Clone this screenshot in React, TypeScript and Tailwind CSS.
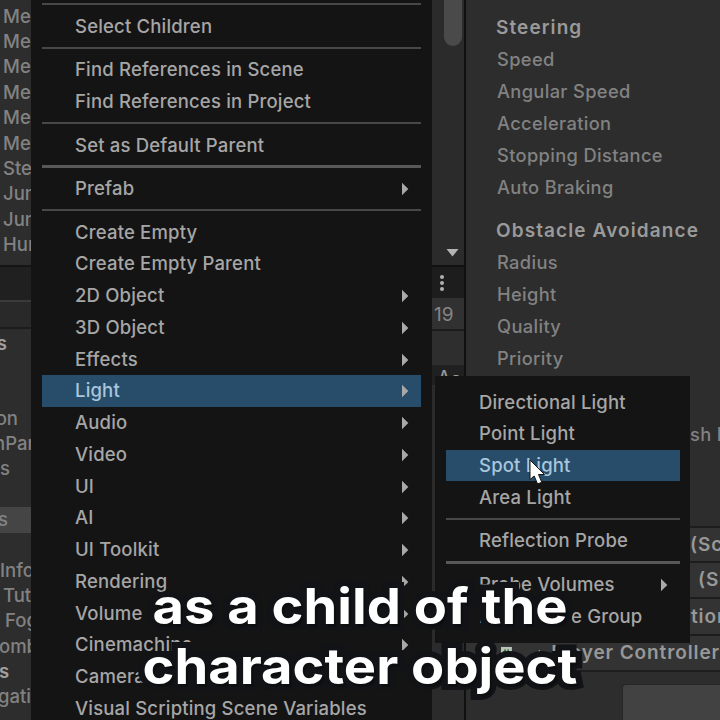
import type { ReactNode } from "react";

function Arrow() {
  return (
    <svg className="h-[14px] w-[8px] shrink-0" viewBox="0 0 8 14">
      <path d="M1 .8 7.3 7 1 13.2Z" fill="#a9a9a9" />
    </svg>
  );
}

function Item({ children, arrow, active }: { children: ReactNode; arrow?: boolean; active?: boolean }) {
  return (
    <div
      className={`flex h-[31.75px] shrink-0 items-center justify-between whitespace-pre pl-[33px] pr-[12px] pt-px text-[18.5px] font-[450] tracking-[0.18px] ${
        active ? "bg-[#274d6b] text-[#a9c6dc]" : "text-[#a6a6a6]"
      }`}
    >
      <span>{children}</span>
      {arrow && <Arrow />}
    </div>
  );
}

function Separator({ thick }: { thick?: boolean }) {
  return (
    <div className="flex h-[11.8px] shrink-0 items-center">
      <div className={`w-full ${thick ? "h-[3px] bg-[#585858]" : "h-[2px] bg-[#484848]"}`} />
    </div>
  );
}

function TreeRow({ children, className = "" }: { children?: ReactNode; className?: string }) {
  return <div className={`flex h-[25.35px] shrink-0 items-center whitespace-pre ${className}`}>{children}</div>;
}

function Field({ children, bold }: { children: ReactNode; bold?: boolean }) {
  return (
    <div
      className={`flex h-[31.8px] shrink-0 items-center whitespace-pre ${
        bold ? "-ml-px text-[19px] font-semibold tracking-[1.1px] text-[#9a9a9a]" : "text-[18.3px] font-[450] tracking-[0.35px] text-[#828282]"
      }`}
    >
      {children}
    </div>
  );
}

function LeftPanel() {
  return (
    <div className="flex w-8 shrink-0 flex-col overflow-hidden bg-[#2d2d2d] text-[18.5px] font-[450] text-[#828282]">
      <div className="flex h-[265px] shrink-0 flex-col overflow-hidden pl-[3px] pt-[4px]">
        {["Me", "Me", "Me", "Me", "Me", "Me", "Ste", "Jun", "Jun", "Hun"].map((t, i) => (
          <TreeRow key={i}>{t}</TreeRow>
        ))}
      </div>
      <div className="h-[35px] shrink-0 border-t-2 border-[#151515] bg-[#202020]" />
      <div className="h-[29px] shrink-0 border-b-2 border-t-2 border-b-[#1c1c1c] border-t-[#3a3a3a] bg-[#292929]" />
      <TreeRow className="mt-[2px] justify-end pr-[25px] font-semibold text-[#a0a0a0]">s</TreeRow>
      <div className="h-[49.5px] shrink-0" />
      <TreeRow className="justify-end pr-[14px]">on</TreeRow>
      <TreeRow className="-ml-[6px]">nPar</TreeRow>
      <TreeRow>s</TreeRow>
      <TreeRow />
      <TreeRow className="bg-[#454545]">
        <span className="-ml-[2px]">s</span>
      </TreeRow>
      <TreeRow />
      <TreeRow>Info</TreeRow>
      <TreeRow className="pl-[3px]">Tut</TreeRow>
      <TreeRow className="pl-[5px]">Fog</TreeRow>
      <TreeRow className="-ml-px">omb</TreeRow>
      <TreeRow className="-ml-px font-semibold text-[#a0a0a0]">s</TreeRow>
      <TreeRow className="-ml-[2px]">gatio</TreeRow>
    </div>
  );
}

function MiddleStrip() {
  return (
    <div className="flex w-8 shrink-0 flex-col overflow-hidden bg-[#2b2b2b]">
      <div className="relative flex h-[265px] shrink-0 flex-col items-end justify-between pr-[2px]">
        <div className="-mt-3 h-[58px] w-[18px] rounded-full bg-[#4a4a4a]" />
        <svg className="mb-[8px] mr-[3px] h-[8px] w-[13px]" viewBox="0 0 12 8">
          <path d="M0 0H12L6 7.5Z" fill="#b4b4b4" />
        </svg>
      </div>
      <div className="flex h-[33px] shrink-0 flex-col items-center justify-center gap-[2px] border-t-2 border-[#111] bg-[#1d1d1d] pr-[12px]">
        <i className="size-[4px] rounded-full bg-[#b0b0b0]" />
        <i className="size-[4px] rounded-full bg-[#b0b0b0]" />
        <i className="size-[4px] rounded-full bg-[#b0b0b0]" />
      </div>
      <div className="flex h-[33px] shrink-0 items-center border-b-2 border-[#1c1c1c] bg-[#313131] pl-[2px] pt-[4px] text-[19px] text-[#858585]">19</div>
      <div className="h-[34px] shrink-0 bg-[#2e2e2e]" />
      <div className="flex h-[20px] shrink-0 items-start bg-[#202020] pl-[7px] pt-px text-[14px] font-semibold leading-[20px] text-[#999]">A -</div>
    </div>
  );
}

function Component({ children, className, height }: { children: ReactNode; className: string; height: string }) {
  return (
    <div className={`flex ${height} shrink-0 items-center whitespace-pre border-t-2 border-[#1d1d1d] bg-[#333] pt-px text-[19px] font-semibold tracking-[0.9px] text-[#989898] ${className}`}>
      {children}
    </div>
  );
}

function Inspector() {
  return (
    <div className="flex flex-1 flex-col overflow-hidden border-l-2 border-[#101010] bg-[#2d2d2d]">
      <div className="flex h-[526px] shrink-0 flex-col pl-[31px] pt-[12.4px]">
        <Field bold>Steering</Field>
        <Field>Speed</Field>
        <Field>Angular Speed</Field>
        <Field>Acceleration</Field>
        <Field>Stopping Distance</Field>
        <Field>Auto Braking</Field>
        <div className="h-[12px] shrink-0" />
        <Field bold>Obstacle Avoidance</Field>
        <Field>Radius</Field>
        <Field>Height</Field>
        <Field>Quality</Field>
        <Field>Priority</Field>
        <div className="mt-[44.5px] pl-[193px]">
          <Field>sh Links</Field>
        </div>
      </div>
      <Component height="h-[35px]" className="pl-[224px]">(Script)</Component>
      <Component height="h-[36px]" className="pl-[232px]">(Script)</Component>
      <Component height="h-[37px]" className="pl-[225px]">tion</Component>
      <Component height="h-[36px]" className="pl-[35px]">
        <svg className="-mt-px mr-[21px] h-[20px] w-[18px]" viewBox="0 0 18 20">
          <path d="M0 0H18V20H0Z" fill="#b9c5b8" />
          <path d="M3 8H15M2 12H16M7 4 5 16M12 4 10 16" stroke="#26652d" strokeWidth="2.4" />
        </svg>
        <svg className="mr-[11px] h-[14px] w-[12px]" viewBox="0 0 12 14">
          <path d="m1 8 3 4 7-11" fill="none" stroke="#b0b0b0" strokeWidth="2" />
        </svg>
        Player Controller
      </Component>
      <div className="flex flex-1 justify-end border-t-2 border-[#1d1d1d] pt-[12px]">
        <div className="h-[60px] w-[98px] rounded-l-[4px] border border-r-0 border-[#262626] bg-[#424242]" />
      </div>
    </div>
  );
}

function ContextMenu() {
  return (
    <div className="absolute left-[31px] top-0 flex h-[720px] w-[401px] flex-col overflow-hidden bg-[#141414] pl-[11px] pr-[11px]">
      <div className="-mt-[1.5px] flex flex-col">
        <Separator />
        <Item>Select Children</Item>
        <Separator />
        <Item>Find References in Scene</Item>
        <Item>Find References in Project</Item>
        <Separator />
        <Item>Set as Default Parent</Item>
        <Separator thick />
        <Item arrow>Prefab</Item>
        <Separator />
        <Item>Create Empty</Item>
        <Item>Create Empty Parent</Item>
        <Item arrow>2D Object</Item>
        <Item arrow>3D Object</Item>
        <Item arrow>Effects</Item>
        <Item arrow active>Light</Item>
        <Item arrow>Audio</Item>
        <Item arrow>Video</Item>
        <Item arrow>UI</Item>
        <Item arrow>AI</Item>
        <Item arrow>UI Toolkit</Item>
        <Item arrow>Rendering</Item>
        <Item arrow>Volume</Item>
        <Item arrow>Cinemachine</Item>
        <Item>Camera</Item>
        <Item>Visual Scripting Scene Variables</Item>
      </div>
    </div>
  );
}

function LightSubmenu() {
  return (
    <div className="absolute left-[435px] top-[376px] flex h-[267px] w-[255px] flex-col bg-[#141414] pl-[11px] pr-[10px] pt-[10.2px]">
      <Item>Directional Light</Item>
      <Item>Point Light</Item>
      <Item active>Spot Light</Item>
      <Item>Area Light</Item>
      <Separator />
      <Item>Reflection Probe</Item>
      <Separator thick />
      <Item arrow>Probe Volumes</Item>
      <Item>Light Probe Group</Item>
    </div>
  );
}

const captionStyle =
  "whitespace-pre text-[50px] font-bold leading-[60px] text-white [paint-order:stroke_fill] [-webkit-text-stroke:12px_#121316] [text-shadow:2px_3px_0_#0d0e10]";

export default function App() {
  return (
    <div className="relative flex h-[720px] w-[720px] overflow-hidden bg-[#2d2d2d] font-['Inter',sans-serif]">
      <LeftPanel />
      <div className="w-[400px] shrink-0" />
      <MiddleStrip />
      <Inspector />
      <ContextMenu />
      <LightSubmenu />
      <svg className="absolute left-[529px] top-[459px] h-[27px] w-[18px]" viewBox="0 0 18 27">
        <path d="M1 1V20.5L5.2 17 8.6 25 12.8 23.2 9.5 15.5H15.5Z" fill="#fff" stroke="#151515" strokeWidth="1" />
      </svg>
      <div className={`absolute left-0 top-[576px] flex w-[720px] scale-x-[1.085] flex-col items-center ${captionStyle}`}>
        <span>as a child of the</span>
        <span>character object</span>
      </div>
    </div>
  );
}
